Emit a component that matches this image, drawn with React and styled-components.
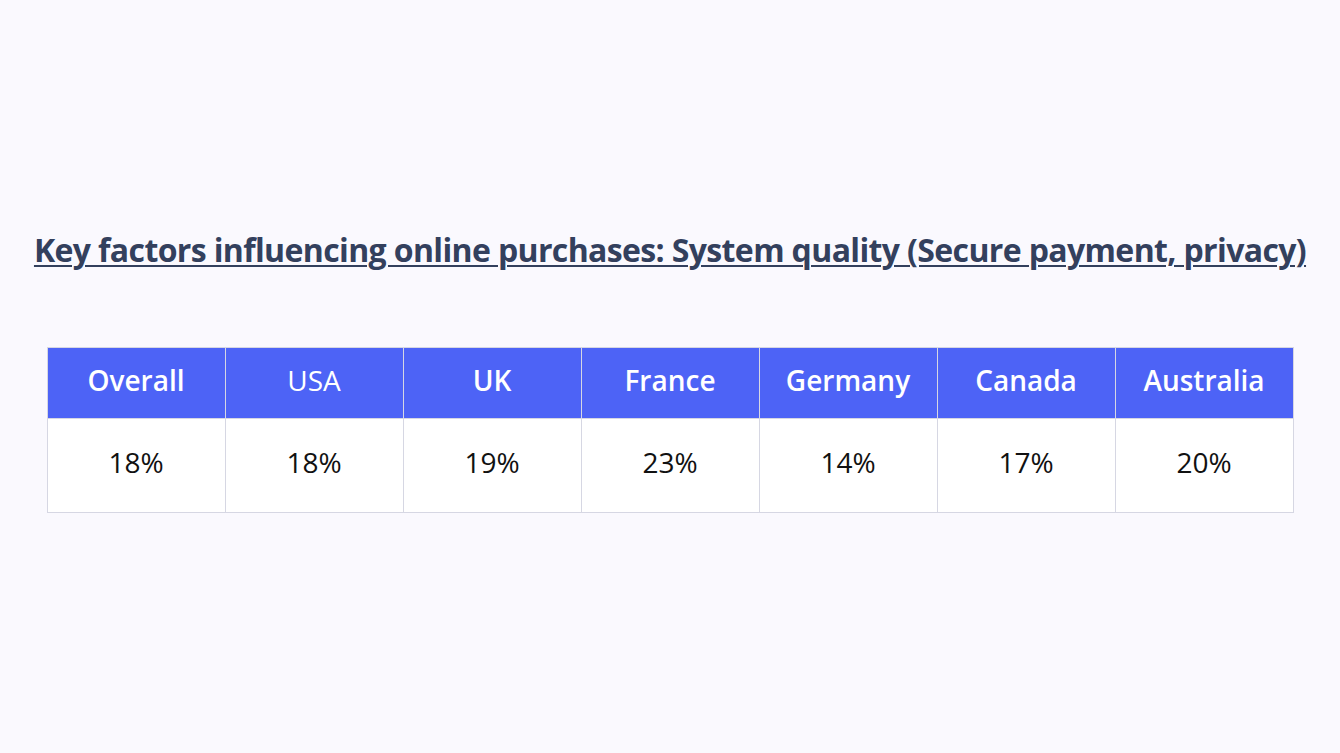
import React from "react";
import styled, { createGlobalStyle } from "styled-components";

const Global = createGlobalStyle`
  html, body { margin: 0; padding: 0; background: #faf9fe; }
  body { font-family: "Open Sans", "Noto Sans", sans-serif; }
`;

const Page = styled.div`
  width: 1340px;
  height: 753px;
  box-sizing: border-box;
  padding-top: 225px;
  display: flex;
  flex-direction: column;
  align-items: center;
  background: #faf9fe;
`;

const Title = styled.h1`
  margin: 0;
  font-family: "Open Sans", sans-serif;
  font-weight: 700;
  font-size: 32px;
  line-height: 50px;
  color: #33405d;
  text-decoration: underline;
  text-decoration-thickness: 2px;
  text-underline-offset: 3px;
  letter-spacing: -0.63px;
  white-space: nowrap;
`;

const Table = styled.table`
  margin-top: 72px;
  border-collapse: collapse;
  width: 1247px;
  table-layout: fixed;
`;

const Th = styled.th`
  background: #4d63f6;
  color: #ffffff;
  height: 64px;
  padding: 0 0 6px;
  border: 1.5px solid #d6d7e3;
  font-family: "Open Sans", sans-serif;
  font-size: 28px;
  line-height: 1;
  font-weight: ${(p) => (p.$light ? 400 : 600)};
  text-align: center;
`;

const Td = styled.td`
  background: #ffffff;
  color: #111111;
  height: 85px;
  padding: 0 0 8px;
  border: 1.5px solid #d6d7e3;
  font-family: "Open Sans", sans-serif;
  font-size: 28px;
  line-height: 1;
  font-weight: 400;
  text-align: center;
`;

const cols = [
  { name: "Overall", value: "18%" },
  { name: "USA", value: "18%", light: true },
  { name: "UK", value: "19%" },
  { name: "France", value: "23%" },
  { name: "Germany", value: "14%" },
  { name: "Canada", value: "17%" },
  { name: "Australia", value: "20%" },
];

export default function App() {
  return (
    <>
      <Global />
      <Page>
        <Title>Key factors influencing online purchases: System quality (Secure payment, privacy)</Title>
        <Table>
          <thead>
            <tr>
              {cols.map((c) => (
                <Th key={c.name} $light={c.light}>{c.name}</Th>
              ))}
            </tr>
          </thead>
          <tbody>
            <tr>
              {cols.map((c) => (
                <Td key={c.name}>{c.value}</Td>
              ))}
            </tr>
          </tbody>
        </Table>
      </Page>
    </>
  );
}
